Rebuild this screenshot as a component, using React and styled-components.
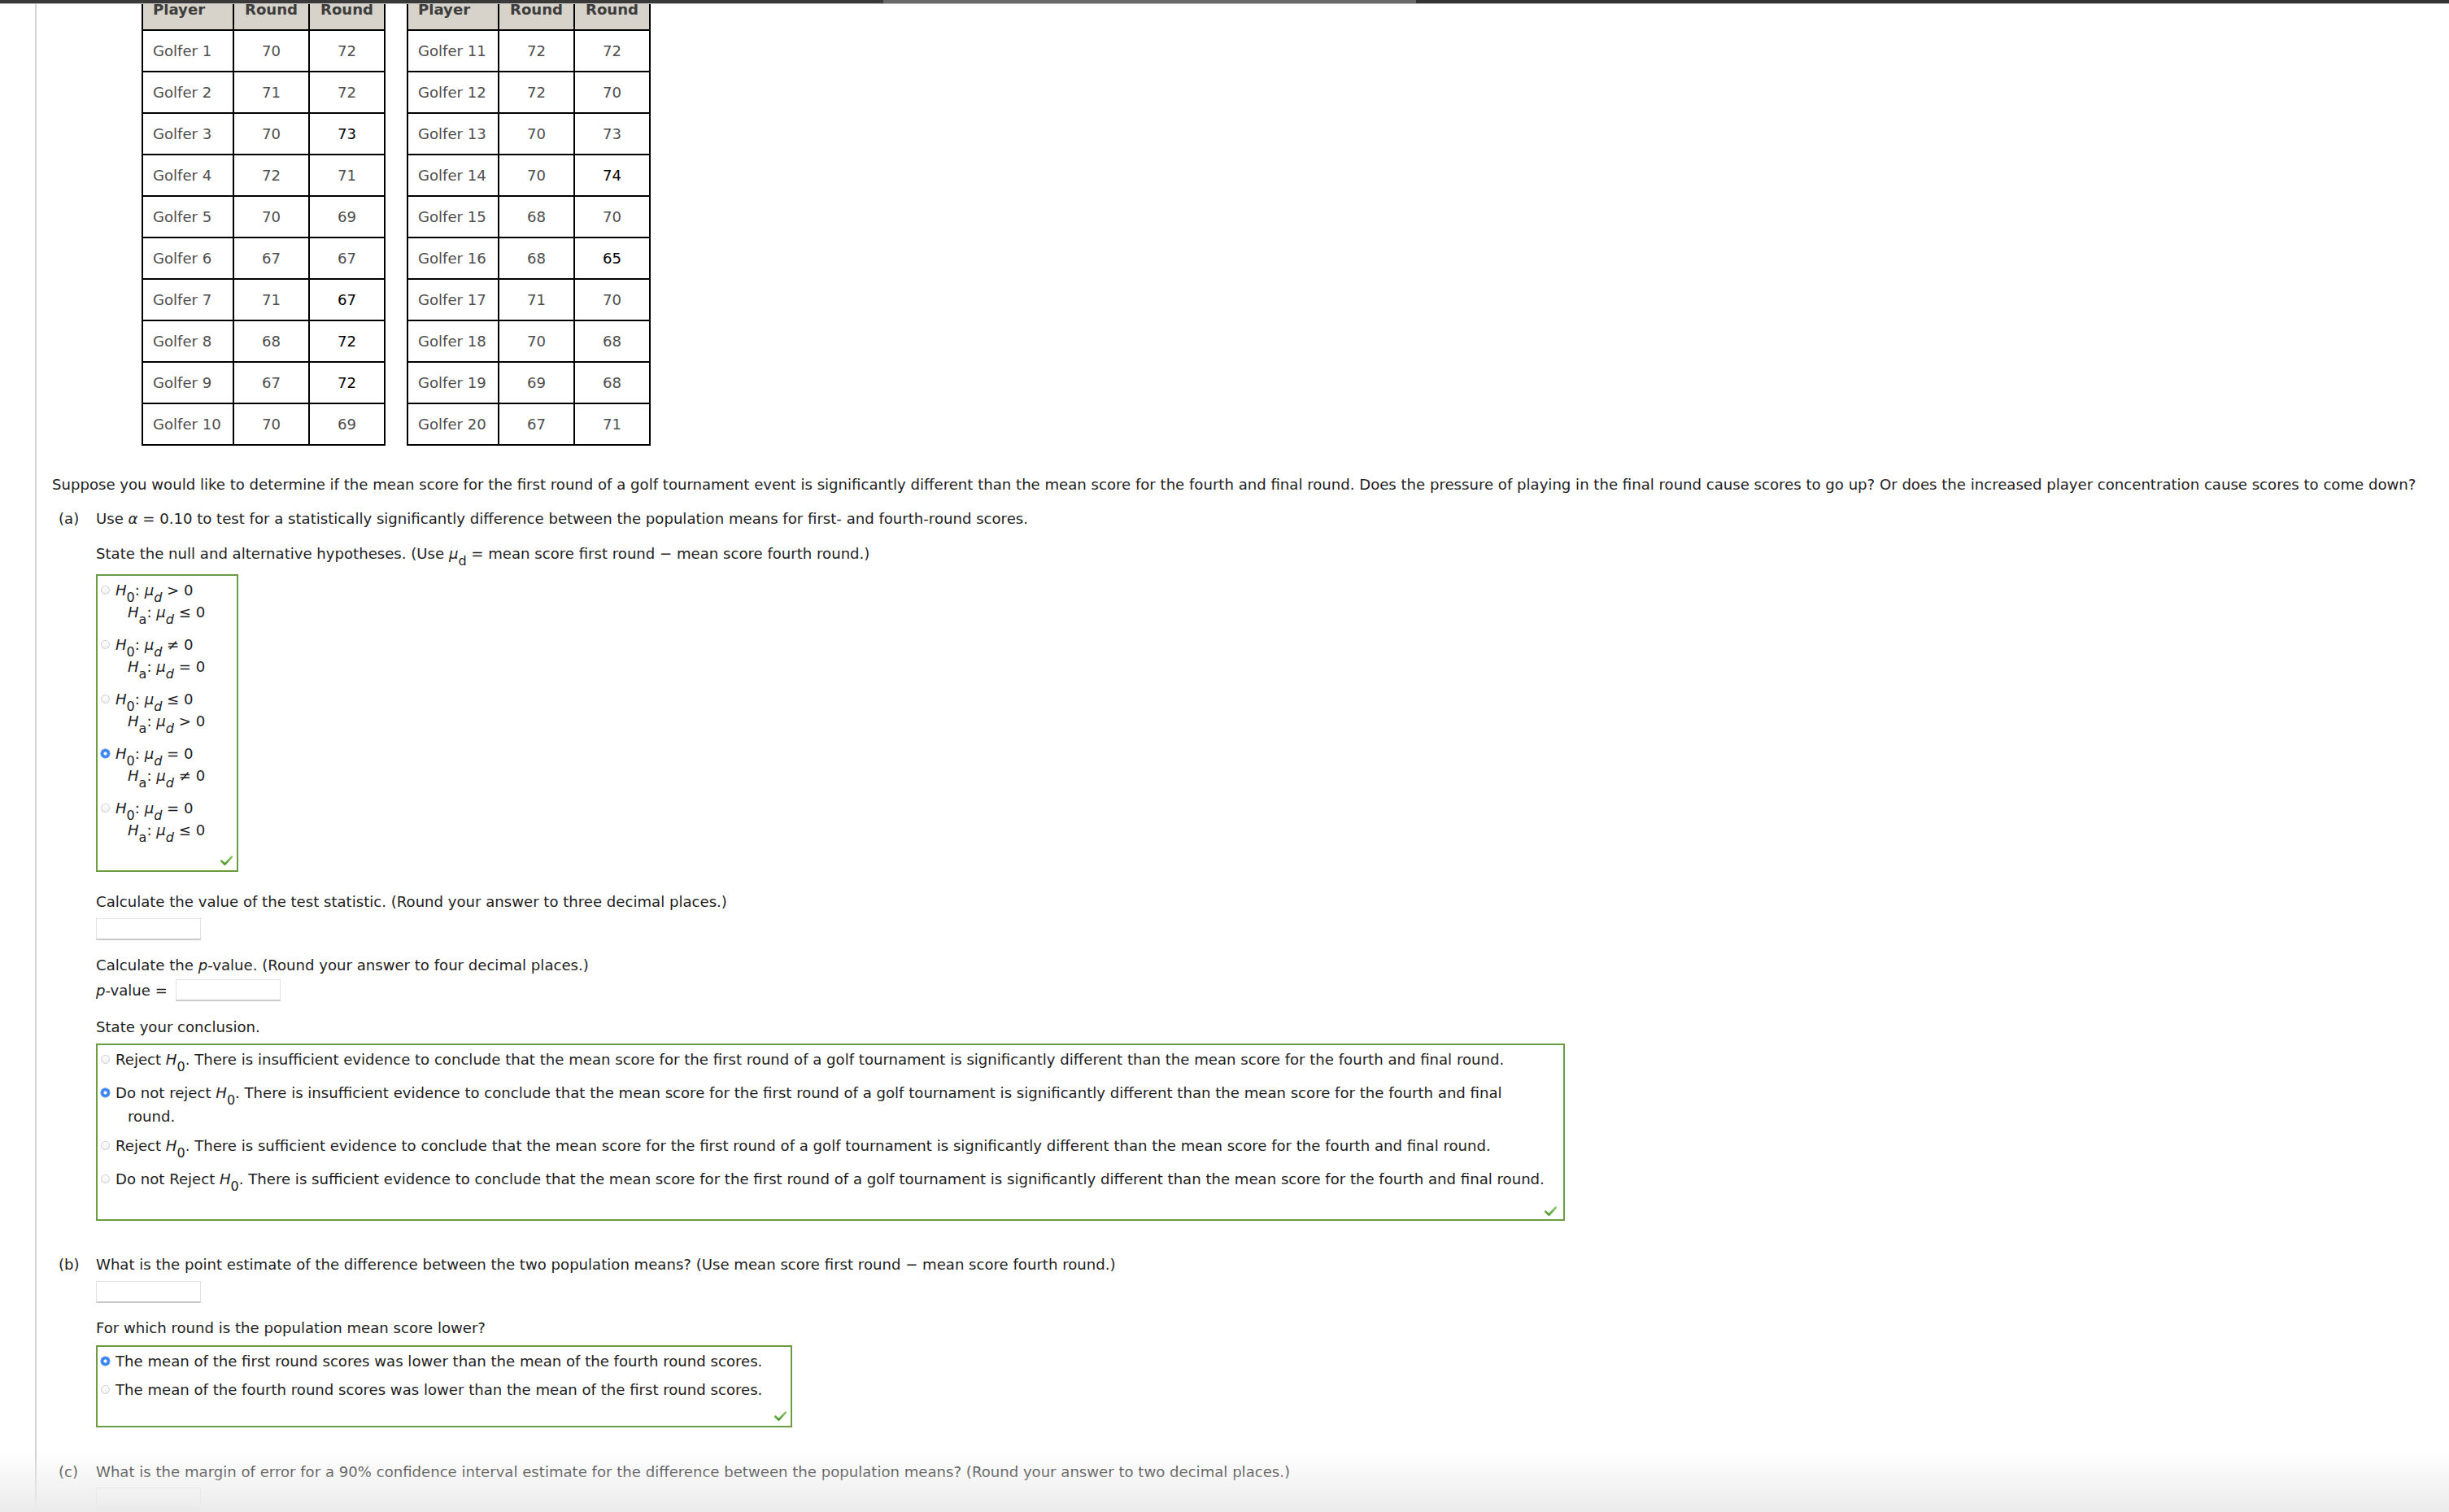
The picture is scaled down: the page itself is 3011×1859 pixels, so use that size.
import React from "react";
import styled, { createGlobalStyle } from "styled-components";

const GlobalStyle = createGlobalStyle`
  html, body { margin: 0; padding: 0; background: #ffffff; }
  body {
    font-family: "DejaVu Sans", Verdana, sans-serif;
    font-size: 18.1px;
    line-height: 23px;
    color: #1e1e1e;
  }
  * { box-sizing: border-box; }
`;

const TopBar = styled.div`
  position: fixed;
  top: 0;
  left: 0;
  right: 0;
  height: 5px;
  display: flex;
  border-bottom: 1px solid #b8b8b8;
  z-index: 5;
`;

const BarSeg = styled.div`
  height: 4px;
  background: ${(p) => p.$color};
  flex: ${(p) => (p.$w ? `0 0 ${p.$w}px` : "1 1 auto")};
`;

const BottomFade = styled.div`
  position: fixed;
  left: 0;
  right: 0;
  bottom: 0;
  height: 76px;
  pointer-events: none;
  background: linear-gradient(to bottom, rgba(255, 255, 255, 0), #ebebeb);
  z-index: 4;
`;

const Page = styled.div`
  display: flow-root;
  margin-left: 43px;
  border-left: 2px solid #d4d4d4;
  min-height: 100vh;
  padding-left: 19px;
  padding-bottom: 40px;
`;

const Tables = styled.div`
  display: flex;
  gap: 26px;
  margin-left: 110px;
  margin-top: -15px;
`;

const ScoreTable = styled.div`
  display: grid;
  grid-template-columns: 110px 91px 91px;
  gap: 2px;
  padding: 2px;
  background: #000;
  width: max-content;
`;

const Cell = styled.div`
  height: 49px;
  display: flex;
  align-items: center;
  justify-content: ${(p) => (p.$center ? "center" : "flex-start")};
  padding: 0 12px;
  background: ${(p) => (p.$head ? "#d7d3cb" : "#ffffff")};
  color: ${(p) => (p.$head ? "#3d3d3d" : p.$dark ? "#000000" : "#4e4e4e")};
  font-weight: ${(p) => (p.$head ? 700 : 400)};
`;

const Intro = styled.p`
  margin: 36px 0 0;
  white-space: nowrap;
`;

const PartRow = styled.div`
  display: grid;
  grid-template-columns: 46px 1fr;
  padding-left: 8px;
  margin-top: ${(p) => p.$mt}px;
`;

const PartLabel = styled.div``;

const PartBody = styled.div`
  display: flex;
  flex-direction: column;
  align-items: flex-start;
`;

const Line = styled.div`
  margin-top: ${(p) => p.$mt || 0}px;
`;

const Sub = styled.sub`
  font-size: 16px;
  line-height: 16px;
  vertical-align: -8px;
  font-style: ${(p) => (p.$italic ? "italic" : "normal")};
`;

const I = styled.i`
  font-style: italic;
`;

const AnswerInput = styled.input`
  display: block;
  width: 129px;
  height: 27px;
  margin: ${(p) => p.$mt || 0}px 0 0 ${(p) => p.$ml || 0}px;
  border: 1px solid #e2e2e2;
  border-bottom: 2px solid #c9c9c9;
  background: #fff;
  font: inherit;
  padding: 0 4px;
  outline: none;
`;

const InlineRow = styled.div`
  display: flex;
  align-items: center;
  height: 28px;
  margin-top: ${(p) => p.$mt || 0}px;
`;

const ChoiceBox = styled.div`
  width: ${(p) => p.$w}px;
  margin-top: ${(p) => p.$mt}px;
  border: 2px solid #6c9c42;
  padding: ${(p) => p.$pt}px 0 0 2px;
  display: flex;
  flex-direction: column;
`;

const Option = styled.div`
  display: flex;
  align-items: flex-start;
  margin-top: ${(p) => (p.$first ? 0 : p.$gap)}px;
  padding-right: ${(p) => p.$pr || 0}px;
  line-height: ${(p) => p.$lh || 23}px;
`;

const RadioSlot = styled.div`
  flex: 0 0 auto;
  width: 20px;
  height: ${(p) => p.$lh || 23}px;
  display: flex;
  align-items: center;
  padding-left: 1.5px;
`;

const Radio = styled.span`
  display: block;
  width: 11px;
  height: 11px;
  border-radius: 50%;
  ${(p) =>
    p.$on
      ? `background: radial-gradient(circle, #ffffff 0 1.8px, #3a86f3 2.4px);
         box-shadow: 0 0 0 0.5px #2f73d8;`
      : `background: linear-gradient(#ffffff, #f0f0f0);
         border: 1px solid #cdcdcd;`}
`;

const OptText = styled.div`
  padding-left: ${(p) => p.$hang || 0}px;
  text-indent: -${(p) => p.$hang || 0}px;
`;

const HypLine = styled.div`
  white-space: nowrap;
  padding-left: ${(p) => (p.$indent ? 15 : 0)}px;
`;

const CheckRow = styled.div`
  height: ${(p) => p.$h}px;
  display: flex;
  justify-content: flex-end;
  align-items: flex-end;
  padding: 0 ${(p) => p.$pr}px ${(p) => p.$pb}px 0;
`;

const Check = () => (
  <svg width="15" height="12" viewBox="0 0 15 12">
    <defs>
      <linearGradient id="ck" x1="0" y1="0" x2="0" y2="1">
        <stop offset="0" stopColor="#8cc66a" />
        <stop offset="1" stopColor="#4e9a2e" />
      </linearGradient>
    </defs>
    <path
      d="M1.2 6.6 L5.4 10.6 L13.8 1.6"
      fill="none"
      stroke="url(#ck)"
      strokeWidth="2.7"
      strokeLinecap="round"
      strokeLinejoin="round"
    />
  </svg>
);

const H0 = () => (
  <>
    <I>H</I>
    <Sub>0</Sub>
  </>
);

const Mu = () => (
  <>
    <I>μ</I>
    <Sub $italic>d</Sub>
  </>
);

const left = [
  ["Golfer 1", 70, 72],
  ["Golfer 2", 71, 72],
  ["Golfer 3", 70, 73, true],
  ["Golfer 4", 72, 71],
  ["Golfer 5", 70, 69],
  ["Golfer 6", 67, 67],
  ["Golfer 7", 71, 67, true],
  ["Golfer 8", 68, 72, true],
  ["Golfer 9", 67, 72, true],
  ["Golfer 10", 70, 69],
];
const right = [
  ["Golfer 11", 72, 72],
  ["Golfer 12", 72, 70],
  ["Golfer 13", 70, 73],
  ["Golfer 14", 70, 74, true],
  ["Golfer 15", 68, 70],
  ["Golfer 16", 68, 65, true],
  ["Golfer 17", 71, 70],
  ["Golfer 18", 70, 68],
  ["Golfer 19", 69, 68],
  ["Golfer 20", 67, 71],
];

const Table = ({ rows }) => (
  <ScoreTable>
    <Cell $head>Player</Cell>
    <Cell $head $center>Round</Cell>
    <Cell $head $center>Round</Cell>
    {rows.map(([name, a, b, dark]) => (
      <React.Fragment key={name}>
        <Cell>{name}</Cell>
        <Cell $center>{a}</Cell>
        <Cell $center $dark={dark}>{b}</Cell>
      </React.Fragment>
    ))}
  </ScoreTable>
);

const hyps = [
  [">", "≤"],
  ["≠", "="],
  ["≤", ">"],
  ["=", "≠"],
  ["=", "≤"],
];

const conclusions = [
  [<>Reject <H0 />. There is insufficient evidence to conclude that the mean score for the first round of a golf tournament is significantly different than the mean score for the fourth and final round.</>, false],
  [<>Do not reject <H0 />. There is insufficient evidence to conclude that the mean score for the first round of a golf tournament is significantly different than the mean score for the fourth and final round.</>, true],
  [<>Reject <H0 />. There is sufficient evidence to conclude that the mean score for the first round of a golf tournament is significantly different than the mean score for the fourth and final round.</>, false],
  [<>Do not Reject <H0 />. There is sufficient evidence to conclude that the mean score for the first round of a golf tournament is significantly different than the mean score for the fourth and final round.</>, false],
];

export default function App() {
  return (
    <>
      <GlobalStyle />
      <TopBar>
        <BarSeg $color="#393939" $w={1086} />
        <BarSeg $color="#696969" $w={655} />
        <BarSeg $color="#343434" />
      </TopBar>
      <Page>
        <Tables>
          <Table rows={left} />
          <Table rows={right} />
        </Tables>

        <Intro>
          Suppose you would like to determine if the mean score for the first round of a golf tournament event is significantly different than the mean score for the fourth and final round. Does the pressure of playing in the final round cause scores to go up? Or does the increased player concentration cause scores to come down?
        </Intro>

        <PartRow $mt={19}>
          <PartLabel>(a)</PartLabel>
          <PartBody>
            <Line>
              Use <I>α</I> = 0.10 to test for a statistically significantly difference between the population means for first- and fourth-round scores.
            </Line>
            <Line $mt={20}>
              State the null and alternative hypotheses. (Use <I>μ</I>
              <Sub>d</Sub> = mean score first round − mean score fourth round.)
            </Line>

            <ChoiceBox $w={175} $mt={7.5} $pt={8.5}>
              {hyps.map(([h0, ha], i) => (
                <Option key={i} $first={i === 0} $gap={13} $lh={19}>
                  <RadioSlot $lh={19}>
                    <Radio $on={i === 3} />
                  </RadioSlot>
                  <div>
                    <HypLine>
                      <H0 />: <Mu /> {h0} 0
                    </HypLine>
                    <HypLine $indent>
                      <I>H</I>
                      <Sub>a</Sub>: <Mu /> {ha} 0
                    </HypLine>
                  </div>
                </Option>
              ))}
              <CheckRow $h={31.5} $pr={5} $pb={6}>
                <Check />
              </CheckRow>
            </ChoiceBox>

            <Line $mt={25.5}>
              Calculate the value of the test statistic. (Round your answer to three decimal places.)
            </Line>
            <AnswerInput $mt={8.5} aria-label="test statistic" />

            <Line $mt={19.5}>
              Calculate the <I>p</I>-value. (Round your answer to four decimal places.)
            </Line>
            <InlineRow $mt={5.5}>
              <span>
                <I>p</I>-value =
              </span>
              <AnswerInput $ml={10} aria-label="p-value" />
            </InlineRow>

            <Line $mt={19}>State your conclusion.</Line>
            <ChoiceBox $w={1806} $mt={9.5} $pt={5.5}>
              {conclusions.map(([text, on], i) => (
                <Option key={i} $first={i === 0} $gap={12.5} $pr={20}>
                  <RadioSlot>
                    <Radio $on={on} />
                  </RadioSlot>
                  <OptText $hang={15}>{text}</OptText>
                </Option>
              ))}
              <CheckRow $h={32} $pr={8} $pb={4}>
                <Check />
              </CheckRow>
            </ChoiceBox>
          </PartBody>
        </PartRow>

        <PartRow $mt={41.5}>
          <PartLabel>(b)</PartLabel>
          <PartBody>
            <Line>
              What is the point estimate of the difference between the two population means? (Use mean score first round − mean score fourth round.)
            </Line>
            <AnswerInput $mt={9.5} aria-label="point estimate" />
            <Line $mt={19}>For which round is the population mean score lower?</Line>
            <ChoiceBox $w={856} $mt={9.5} $pt={6.5}>
              <Option $first>
                <RadioSlot>
                  <Radio $on />
                </RadioSlot>
                <OptText>The mean of the first round scores was lower than the mean of the fourth round scores.</OptText>
              </Option>
              <Option $gap={12}>
                <RadioSlot>
                  <Radio />
                </RadioSlot>
                <OptText>The mean of the fourth round scores was lower than the mean of the first round scores.</OptText>
              </Option>
              <CheckRow $h={32.5} $pr={5} $pb={6}>
                <Check />
              </CheckRow>
            </ChoiceBox>
          </PartBody>
        </PartRow>

        <PartRow $mt={43.5}>
          <PartLabel>(c)</PartLabel>
          <PartBody>
            <Line>
              What is the margin of error for a 90% confidence interval estimate for the difference between the population means? (Round your answer to two decimal places.)
            </Line>
            <AnswerInput $mt={7.5} aria-label="margin of error" />
          </PartBody>
        </PartRow>
      </Page>
      <BottomFade />
    </>
  );
}
